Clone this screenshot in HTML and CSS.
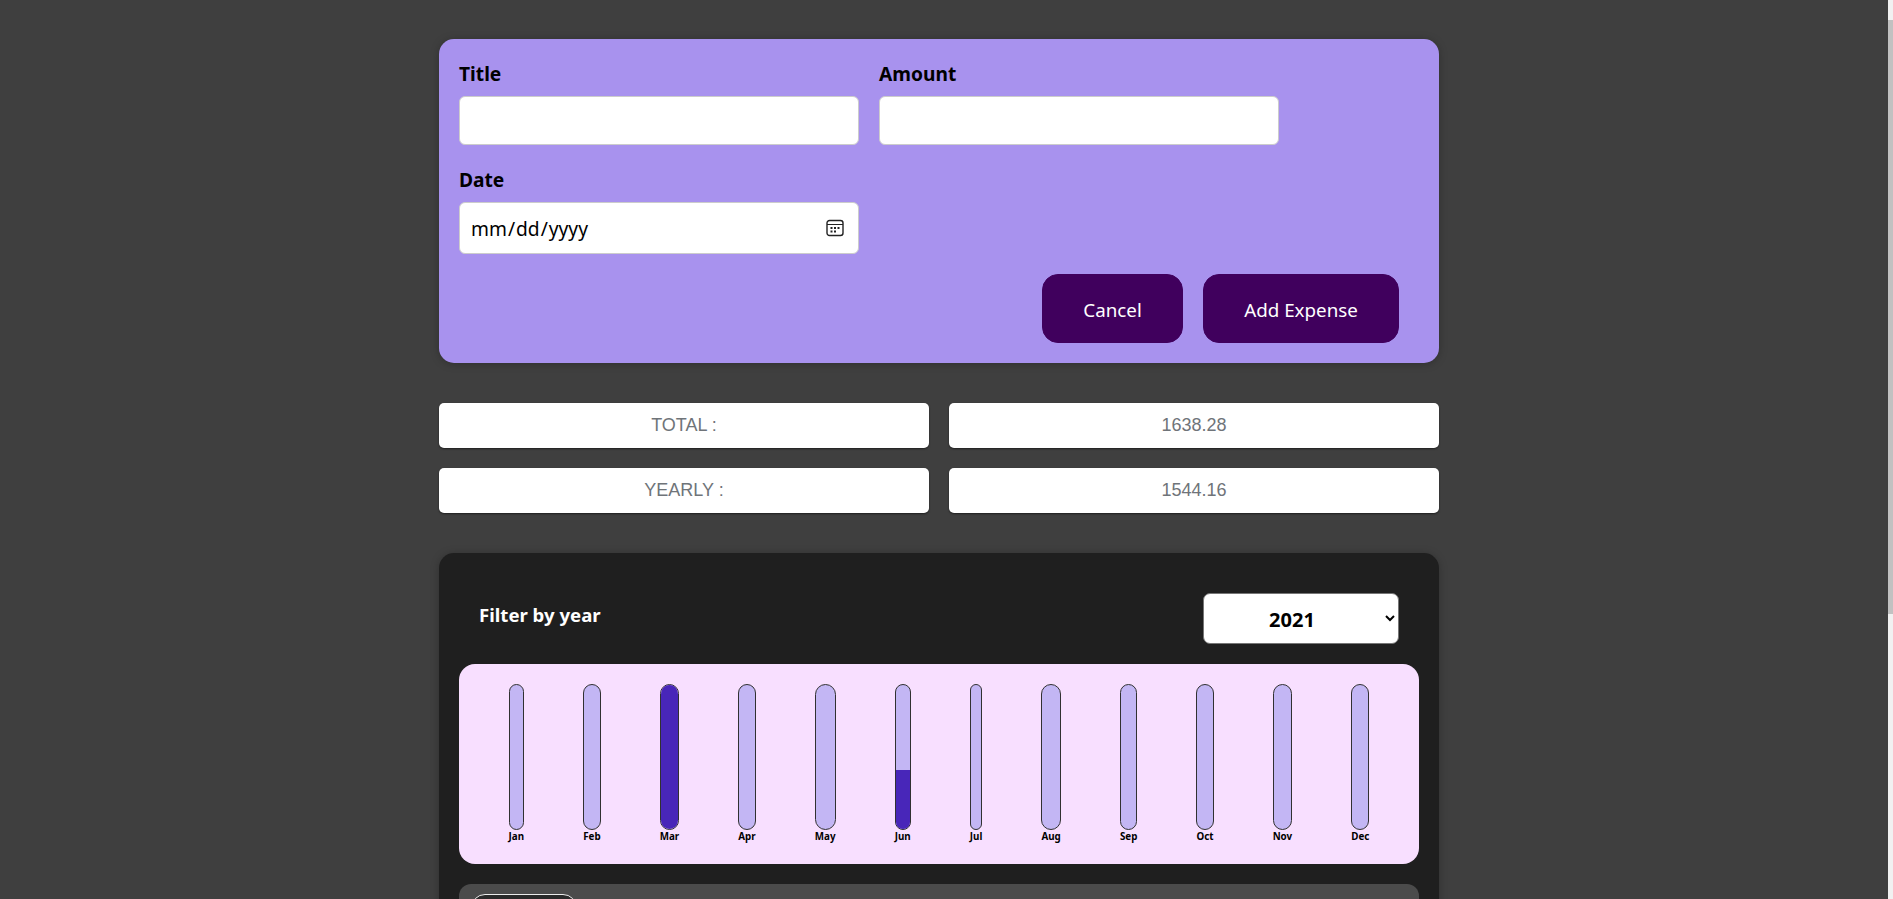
FILE: index.html
```html
<!DOCTYPE html>
<html lang="en">
<head>
  <meta charset="utf-8">
  <title>Expense Tracker</title>
  <link rel="stylesheet" href="styles.css">
</head>
<body>
<div class="new-expense">
  <form>
    <div class="new-expense__controls">
      <div class="new-expense__control">
        <label for="title">Title</label>
        <input type="text" id="title">
      </div>
      <div class="new-expense__control">
        <label for="amount">Amount</label>
        <input type="number" id="amount" min="0.01" step="0.01">
      </div>
      <div class="new-expense__control">
        <label for="date">Date</label>
        <input type="date" id="date" class="date-input">
      </div>
    </div>
    <div class="new-expense__actions">
      <button type="button">Cancel</button>
      <button type="submit">Add Expense</button>
    </div>
  </form>
</div>

<div class="totals">
  <div class="totals__box">TOTAL :</div>
  <div class="totals__box">1638.28</div>
  <div class="totals__box">YEARLY :</div>
  <div class="totals__box">1544.16</div>
</div>

<div class="expenses">
  <div class="expenses-filter">
    <label for="year">Filter by year</label>
    <select id="year">
      <option>2021</option>
      <option>2020</option>
      <option>2019</option>
    </select>
  </div>

  <div class="chart">
    <div class="chart-bar"><div class="chart-bar__inner"></div><div class="chart-bar__label">Jan</div></div>
    <div class="chart-bar"><div class="chart-bar__inner"></div><div class="chart-bar__label">Feb</div></div>
    <div class="chart-bar"><div class="chart-bar__inner"><div class="chart-bar__fill" style="height: 100%"></div></div><div class="chart-bar__label">Mar</div></div>
    <div class="chart-bar"><div class="chart-bar__inner"></div><div class="chart-bar__label">Apr</div></div>
    <div class="chart-bar"><div class="chart-bar__inner"></div><div class="chart-bar__label">May</div></div>
    <div class="chart-bar"><div class="chart-bar__inner"><div class="chart-bar__fill" style="height: 41%"></div></div><div class="chart-bar__label">Jun</div></div>
    <div class="chart-bar"><div class="chart-bar__inner"></div><div class="chart-bar__label">Jul</div></div>
    <div class="chart-bar"><div class="chart-bar__inner"></div><div class="chart-bar__label">Aug</div></div>
    <div class="chart-bar"><div class="chart-bar__inner"></div><div class="chart-bar__label">Sep</div></div>
    <div class="chart-bar"><div class="chart-bar__inner"></div><div class="chart-bar__label">Oct</div></div>
    <div class="chart-bar"><div class="chart-bar__inner"></div><div class="chart-bar__label">Nov</div></div>
    <div class="chart-bar"><div class="chart-bar__inner"></div><div class="chart-bar__label">Dec</div></div>
  </div>

  <div class="expense-item">
    <div class="expense-date"></div>
  </div>
</div>

<div class="fake-scrollbar"><div class="fake-scrollbar__thumb"></div></div>
</body>
</html>
```
FILE: styles.css
```css
* {
  box-sizing: border-box;
}

html {
  font-family: "Noto Sans", sans-serif;
}

body {
  margin: 0;
  background-color: #3f3f3f;
  padding: 39px 15px 40px 0;
}

/* the browser's scrollbar, only its left edge shows in the frame */
.fake-scrollbar {
  position: fixed;
  top: 0;
  right: 0;
  bottom: 0;
  width: 5px;
  padding-top: 20px;
  background-color: #f1f1f1;
}

.fake-scrollbar__thumb {
  height: 594px;
  background-color: #c1c1c1;
}

/* form card */
.new-expense {
  background-color: #a892ee;
  padding: 20px;
  margin: 0 auto 40px;
  width: 1000px;
  border-radius: 15px;
  box-shadow: 0 1px 8px rgba(0, 0, 0, 0.25);
}

.new-expense__controls {
  display: flex;
  flex-wrap: wrap;
  gap: 20px;
  margin-bottom: 20px;
}

.new-expense__control label {
  display: block;
  font-weight: bold;
  font-size: 19.2px;
  line-height: 30px;
  margin-bottom: 7px;
  color: #000;
}

.new-expense__control input {
  display: block;
  font: inherit;
  font-size: 19.2px;
  padding: 8px 10px;
  height: 49px;
  width: 400px;
  border: 1px solid #ccc;
  border-radius: 6px;
  background: #fff;
}

.new-expense__control .date-input {
  height: 52px;
}

/* windows style calendar glyph, the linux one is solid */
.date-input::-webkit-calendar-picker-indicator {
  width: 18px;
  height: 18px;
  padding: 0;
  margin: 0 4px 0 0;
  background: url("data:image/svg+xml,%3Csvg xmlns='http://www.w3.org/2000/svg' viewBox='0 0 18 18'%3E%3Crect x='1' y='1.5' width='16' height='15' rx='2.5' fill='none' stroke='%23222' stroke-width='1.4'/%3E%3Cpath d='M1 5.5h16' stroke='%23222' stroke-width='1.2'/%3E%3Cpath d='M4.5 8h2v2h-2zM8 8h2v2H8zM11.5 8h2v2h-2zM4.5 11.5h2v2h-2zM8 11.5h2v2H8z' fill='%23222'/%3E%3C/svg%3E") center no-repeat;
}

.new-expense__actions {
  display: flex;
  justify-content: flex-end;
  gap: 20px;
  padding-right: 20px;
}

.new-expense__actions button {
  font: inherit;
  font-size: 18.8px;
  height: 69px;
  width: 141px;
  padding: 2px 0 0;
  border: 1px solid #40005d;
  border-radius: 16px;
  background-color: #40005d;
  color: #fff;
  cursor: pointer;
}

.new-expense__actions button[type="submit"] {
  width: 196px;
}

/* totals */
.totals {
  display: grid;
  grid-template-columns: 490px 490px;
  gap: 20px;
  width: 1000px;
  margin: 0 auto 40px;
}

.totals__box {
  height: 45px;
  line-height: 45px;
  text-align: center;
  font-family: "Liberation Sans", sans-serif;
  font-size: 18px;
  color: #6f7479;
  background-color: #fff;
  border-radius: 5px;
  box-shadow: 0 1px 2px rgba(0, 0, 0, 0.5);
}

/* expenses card */
.expenses {
  background-color: #1f1f1f;
  padding: 20px;
  margin: 0 auto;
  width: 1000px;
  border-radius: 15px;
  box-shadow: 0 1px 8px rgba(0, 0, 0, 0.25);
}

.expenses-filter {
  display: flex;
  justify-content: space-between;
  align-items: center;
  color: #fff;
  padding: 20px 20px 20px;
}

.expenses-filter label {
  font-weight: bold;
  font-size: 18.6px;
  margin-top: -8px;
}

.expenses-filter select {
  font: inherit;
  font-size: 20px;
  font-weight: bold;
  text-align: center;
  width: 196px;
  height: 51px;
  padding: 2px 6px 0 0;
  border: 1px solid #767676;
  border-radius: 7px;
  background: #fff;
  color: #000;
}

.chart {
  display: flex;
  justify-content: space-around;
  height: 200px;
  padding: 20px;
  border-radius: 16px;
  background-color: #f8dfff;
}

.chart-bar {
  display: flex;
  flex-direction: column;
  align-items: stretch;
  height: 100%;
}

.chart-bar__inner {
  flex: 1;
  display: flex;
  flex-direction: column;
  justify-content: flex-end;
  overflow: hidden;
  border: 1px solid #313131;
  border-radius: 12px;
  background-color: #c3b6f4;
}

.chart-bar__fill {
  width: 100%;
  background-color: #4826b9;
}

.chart-bar__label {
  font-weight: bold;
  font-size: 9.8px;
  line-height: 14px;
  text-align: center;
}

.expense-item {
  margin-top: 20px;
  padding: 10px 12px;
  border-radius: 12px;
  background-color: #4b4b4b;
}

.expense-date {
  width: 106px;
  height: 88px;
  border: 1px solid #ececec;
  border-radius: 14px;
  background-color: #2a2a2a;
}
```
